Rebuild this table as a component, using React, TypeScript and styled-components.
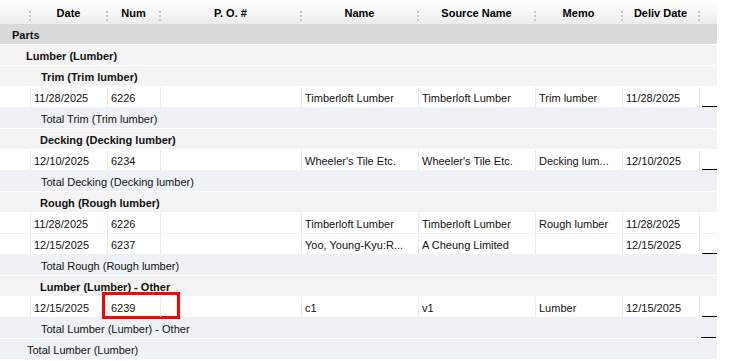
import React from 'react';
import styled, { createGlobalStyle } from 'styled-components';

type Kind = 'section' | 'group' | 'data' | 'total';

interface Line {
  kind: Kind;
  label?: string;
  indent?: number;
  cells?: string[];
  underline?: boolean;
  flagged?: boolean;
}

const COLUMNS = ['', 'Date', 'Num', 'P. O. #', 'Name', 'Source Name', 'Memo', 'Deliv Date', ''];

const lines: Line[] = [
  { kind: 'section', label: 'Parts', indent: 12 },
  { kind: 'group', label: 'Lumber (Lumber)', indent: 26 },
  { kind: 'group', label: 'Trim (Trim lumber)', indent: 41 },
  {
    kind: 'data',
    cells: ['11/28/2025', '6226', '', 'Timberloft Lumber', 'Timberloft Lumber', 'Trim lumber', '11/28/2025'],
    underline: true,
  },
  { kind: 'total', label: 'Total Trim (Trim lumber)', indent: 41 },
  { kind: 'group', label: 'Decking (Decking lumber)', indent: 40 },
  {
    kind: 'data',
    cells: ['12/10/2025', '6234', '', "Wheeler's Tile Etc.", "Wheeler's Tile Etc.", 'Decking lum...', '12/10/2025'],
    underline: true,
  },
  { kind: 'total', label: 'Total Decking (Decking lumber)', indent: 41 },
  { kind: 'group', label: 'Rough (Rough lumber)', indent: 40 },
  {
    kind: 'data',
    cells: ['11/28/2025', '6226', '', 'Timberloft Lumber', 'Timberloft Lumber', 'Rough lumber', '11/28/2025'],
  },
  {
    kind: 'data',
    cells: ['12/15/2025', '6237', '', 'Yoo, Young-Kyu:R...', 'A Cheung Limited', '', '12/15/2025'],
    underline: true,
  },
  { kind: 'total', label: 'Total Rough (Rough lumber)', indent: 41 },
  { kind: 'group', label: 'Lumber (Lumber) - Other', indent: 40 },
  {
    kind: 'data',
    cells: ['12/15/2025', '6239', '', 'c1', 'v1', 'Lumber', '12/15/2025'],
    underline: true,
    flagged: true,
  },
  { kind: 'total', label: 'Total Lumber (Lumber) - Other', indent: 41, underline: true },
  { kind: 'total', label: 'Total Lumber (Lumber)', indent: 27 },
];

export default function App() {
  return (
    <>
      <GlobalStyle />
      <Report>
        <Header>
          {COLUMNS.map((title, i) => (
            <HeadCell key={i} divider={i > 0}>
              {title}
            </HeadCell>
          ))}
        </Header>
        {lines.map((line, i) =>
          line.kind === 'data' ? (
            <DataRow key={i}>
              <Cell />
              {line.cells!.map((value, c) => (
                <Cell key={c} bordered>
                  {value}
                  {line.flagged && c === 1 && <Highlight />}
                </Cell>
              ))}
              <TotalCell bordered>{line.underline && <Underline />}</TotalCell>
            </DataRow>
          ) : (
            <LabelRow key={i} kind={line.kind}>
              <Label indent={line.indent ?? 0} bold={line.kind !== 'total'}>
                {line.label}
              </Label>
              <TotalCell>{line.underline && <Underline />}</TotalCell>
            </LabelRow>
          )
        )}
      </Report>
    </>
  );
}

const GlobalStyle = createGlobalStyle`
  html, body {
    margin: 0;
    padding: 0;
    background: #ffffff;
  }
  body {
    font-family: 'Liberation Sans', Arial, sans-serif;
    font-size: 11px;
    color: #111111;
  }
`;

const GRID = '30px 77px 53px 141px 117px 117px 87px 77px 18px';

const Report = styled.div`
  width: 717px;
  display: flex;
  flex-direction: column;
`;

const Header = styled.div`
  display: grid;
  grid-template-columns: ${GRID};
  height: 24px;
  background: linear-gradient(#ffffff, #f6f6f6 55%, #ebebeb);
`;

const HeadCell = styled.div<{ divider: boolean }>`
  position: relative;
  display: flex;
  align-items: center;
  justify-content: center;
  padding-top: 2px;
  font-weight: 700;
  font-size: 11px;
  color: #000000;

  &::before {
    content: '';
    display: ${props => (props.divider ? 'block' : 'none')};
    position: absolute;
    left: -1px;
    top: 11px;
    height: 10px;
    border-left: 2px dotted #c6c6c6;
  }
`;

const ROW_BG: Record<Kind, string> = {
  section: '#dadada',
  group: '#f3f3f3',
  data: '#ffffff',
  total: '#eef2f6',
};

const LabelRow = styled.div<{ kind: Kind }>`
  display: flex;
  height: 20px;
  border-bottom: 1px solid #ffffff;
  background: ${props => ROW_BG[props.kind]};
`;

const Label = styled.div<{ indent: number; bold: boolean }>`
  flex: 1;
  display: flex;
  align-items: center;
  padding-left: ${props => props.indent}px;
  padding-top: 2px;
  font-weight: ${props => (props.bold ? 700 : 400)};
  white-space: nowrap;
`;

const DataRow = styled.div`
  display: grid;
  grid-template-columns: ${GRID};
  height: 20px;
  border-bottom: 1px solid #f0f0f0;
  background: ${ROW_BG.data};
`;

const Cell = styled.div<{ bordered?: boolean }>`
  position: relative;
  display: flex;
  align-items: center;
  padding-left: 3px;
  padding-top: 2px;
  white-space: nowrap;
  overflow: visible;
  border-left: ${props => (props.bordered ? '1px solid #ececec' : 'none')};
`;

const TotalCell = styled(Cell)`
  width: 18px;
  box-sizing: border-box;
  align-items: flex-end;
  padding-left: 2px;
  padding-top: 0;
`;

const Underline = styled.span`
  display: block;
  width: 15px;
  height: 1px;
  background: #000000;
`;

const Highlight = styled.span`
  position: absolute;
  left: -6px;
  top: -5px;
  width: 78px;
  height: 27px;
  box-sizing: border-box;
  border: 3px solid #ff0000;
  pointer-events: none;
`;
